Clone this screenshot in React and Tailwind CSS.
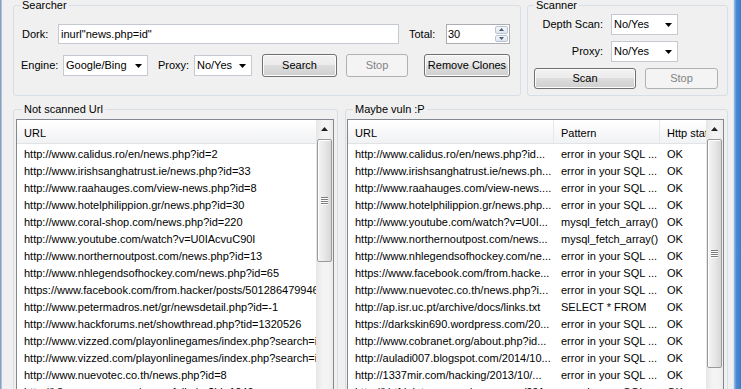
import React from 'react'

const leftRows = [
  'http://www.calidus.ro/en/news.php?id=2',
  'http://www.irishsanghatrust.ie/news.php?id=33',
  'http://www.raahauges.com/view-news.php?id=8',
  'http://www.hotelphilippion.gr/news.php?id=30',
  'http://www.coral-shop.com/news.php?id=220',
  'http://www.youtube.com/watch?v=U0IAcvuC90I',
  'http://www.northernoutpost.com/news.php?id=13',
  'http://www.nhlegendsofhockey.com/news.php?id=65',
  'https://www.facebook.com/from.hacker/posts/501286479946',
  'http://www.petermadros.net/gr/newsdetail.php?id=-1',
  'http://www.hackforums.net/showthread.php?tid=1320526',
  'http://www.vizzed.com/playonlinegames/index.php?search=in',
  'http://www.vizzed.com/playonlinegames/index.php?search=in',
  'http://www.nuevotec.co.th/news.php?id=8',
  'http://k3newsroom.com/news_full.php?id=1240',
]

const sqlErr = 'error in your SQL ...'

const rightRows = [
  ['http://www.calidus.ro/en/news.php?id...', sqlErr],
  ['http://www.irishsanghatrust.ie/news.ph...', sqlErr],
  ['http://www.raahauges.com/view-news....', sqlErr],
  ['http://www.hotelphilippion.gr/news.php...', sqlErr],
  ['http://www.youtube.com/watch?v=U0I...', 'mysql_fetch_array()'],
  ['http://www.northernoutpost.com/news...', 'mysql_fetch_array()'],
  ['http://www.nhlegendsofhockey.com/ne...', sqlErr],
  ['https://www.facebook.com/from.hacke...', sqlErr],
  ['http://www.nuevotec.co.th/news.php?i...', sqlErr],
  ['http://ap.isr.uc.pt/archive/docs/links.txt', 'SELECT * FROM'],
  ['https://darkskin690.wordpress.com/20...', sqlErr],
  ['http://www.cobranet.org/about.php?id...', sqlErr],
  ['http://auladi007.blogspot.com/2014/10...', sqlErr],
  ['http://1337mir.com/hacking/2013/10/...', sqlErr],
  ['http://kbtfdaleteam.wordpress.com/201...', sqlErr],
]

// groupbox (win7 look)
const GroupBox = ({ title, className, children }) => (
  <fieldset className={'min-w-0 shrink-0 rounded-[3px] border border-[#d5dfe5] ' + className}>
    <legend className="ml-[6px] px-[2px] leading-[13px]">{title}</legend>
    {children}
  </fieldset>
)

const Button = ({ label, disabled, className }) =>
  disabled ? (
    <div className={'flex items-center justify-center rounded-[3px] border border-[#adb2b5] bg-[#f4f4f4] text-[#838383] ' + className}>
      {label}
    </div>
  ) : (
    <div
      className={
        'flex items-center justify-center rounded-[3px] border border-[#707070] bg-[linear-gradient(to_bottom,#f2f2f2_0%,#ebebeb_50%,#dddddd_50%,#cfcfcf_100%)] shadow-[inset_0_0_0_1px_#fcfcfc] ' +
        className
      }
    >
      {label}
    </div>
  )

const Combo = ({ value, className }) => (
  <div className={'flex h-[21px] items-center justify-between border border-[#c5c9d0] bg-white pl-[2px] pr-[5px] ' + className}>
    <span>{value}</span>
    <svg width="7" height="4" viewBox="0 0 7 4">
      <polygon points="0,0 7,0 3.5,4" fill="#000" />
    </svg>
  </div>
)

const Numeric = () => (
  <div className="flex h-[20px] w-[64px] items-stretch border border-[#abadb3] bg-white">
    <span className="flex-1 pl-[1px] leading-[18px]">30</span>
    <div className="flex w-[15px] flex-col gap-[1px] p-[1px]">
      <div className="flex flex-1 items-center justify-center rounded-[2px] border border-[#b8c4d2] bg-[linear-gradient(to_bottom,#f6f8fb,#dde4ec)]">
        <svg width="5" height="3" viewBox="0 0 5 3">
          <polygon points="0,3 5,3 2.5,0" fill="#4b5d78" />
        </svg>
      </div>
      <div className="flex flex-1 items-center justify-center rounded-[2px] border border-[#b8c4d2] bg-[linear-gradient(to_bottom,#f6f8fb,#dde4ec)]">
        <svg width="5" height="3" viewBox="0 0 5 3">
          <polygon points="0,0 5,0 2.5,3" fill="#4b5d78" />
        </svg>
      </div>
    </div>
  </div>
)

const Scrollbar = ({ thumbH }) => (
  <div className="flex w-[17px] shrink-0 flex-col bg-[linear-gradient(to_right,#e6e6e6,#f4f4f4_40%,#f4f4f4_70%,#ebebeb)]">
    <div className="flex h-[17px] items-center justify-center">
      <svg width="7" height="4" viewBox="0 0 7 4">
        <polygon points="0,4 7,4 3.5,0" fill="#1f1f1f" />
      </svg>
    </div>
    <div
      className="mx-[1px] mt-[2px] flex flex-col items-center justify-center gap-[1px] rounded-[2px] border border-[#9a9a9a] bg-[linear-gradient(to_right,#f5f5f5,#e8e8e8_50%,#d6d6d6)] shadow-[inset_1px_1px_0_#ffffff]"
      style={{ height: thumbH }}
    >
      {[0, 1, 2, 3].map((i) => (
        <div key={i} className="h-[1px] w-[7px] bg-[#7d7d7d] shadow-[0_1px_0_#ffffff]" />
      ))}
    </div>
  </div>
)

const HeaderCell = ({ label, className }) => (
  <div className={'h-full overflow-hidden whitespace-nowrap border-r border-[#e8e8e8] pl-[7px] pt-[7px] leading-[13px] ' + className}>
    {label}
  </div>
)

export default function App() {
  return (
    <div className="flex h-[389px] w-[741px] overflow-hidden bg-[#f0f0f0] font-['Liberation_Sans',Arial,sans-serif] text-[11px] text-black">
      <div className="h-full w-[2px] shrink-0 bg-[linear-gradient(to_right,#7390b4,#c4d3e4)]" />

      <div className="flex h-full w-[731px] shrink-0 flex-col pl-[11px] pr-[5px]">
        {/* top groups */}
        <div className="-mt-[1px] flex gap-[6px]">
          <GroupBox title="Searcher" className="h-[97px] w-[508px]">
            <div className="mt-[12px] flex h-[20px] items-center pl-[8px]">
              <span className="w-[36px]">Dork:</span>
              <div className="flex h-[20px] w-[341px] items-center border border-[#c5c9d0] bg-white pl-[2px]">
                inurl"news.php=id"
              </div>
              <span className="ml-[10px] w-[37px]">Total:</span>
              <Numeric />
            </div>
            <div className="mt-[10px] flex h-[23px] items-center pl-[7px]">
              <span className="w-[42px]">Engine:</span>
              <Combo value="Google/Bing" className="w-[85px]" />
              <span className="ml-[10px] w-[36px]">Proxy:</span>
              <Combo value="No/Yes" className="w-[58px]" />
              <Button label="Search" className="ml-[10px] h-[23px] w-[75px]" />
              <Button label="Stop" disabled className="ml-[9px] h-[23px] w-[62px]" />
              <Button label="Remove Clones" className="ml-[16px] h-[23px] w-[86px]" />
            </div>
          </GroupBox>

          <GroupBox title="Scanner" className="h-[97px] w-[201px]">
            <div className="mt-[2px] flex h-[21px] items-center">
              <span className="w-[75px] text-right">Depth Scan:</span>
              <Combo value="No/Yes" className="ml-[8px] w-[67px]" />
            </div>
            <div className="mt-[6px] flex h-[21px] items-center">
              <span className="w-[75px] text-right">Proxy:</span>
              <Combo value="No/Yes" className="ml-[8px] w-[67px]" />
            </div>
            <div className="mt-[6px] flex items-center pl-[6px]">
              <Button label="Scan" className="h-[21px] w-[102px]" />
              <Button label="Stop" disabled className="ml-[9px] h-[21px] w-[73px]" />
            </div>
          </GroupBox>
        </div>

        {/* bottom groups */}
        <div className="mt-[7px] flex gap-[7px]">
          <GroupBox title="Not scanned Url" className="h-[300px] w-[325px] pl-[2px] pr-[3px]">
            <div className="mt-[3px] flex h-[290px] w-[318px] border border-[#828790] bg-white">
              <div className="flex min-w-0 flex-1 flex-col overflow-hidden">
                <div className="flex h-[24px] shrink-0 border-b border-[#e2e3e5] bg-[linear-gradient(to_bottom,#ffffff,#f1f2f4)]">
                  <HeaderCell label="URL" className="min-w-0 flex-1 border-r-0" />
                </div>
                <div className="pt-[2px]">
                  {leftRows.map((r, i) => (
                    <div key={i} className="h-[17px] overflow-hidden whitespace-nowrap pl-[7px] leading-[17px]">
                      {r}
                    </div>
                  ))}
                </div>
              </div>
              <Scrollbar thumbH={123} />
            </div>
          </GroupBox>

          <GroupBox title="Maybe vuln :P" className="h-[300px] w-[383px] pl-[1px] pr-[3px]">
            <div className="mt-[3px] flex h-[290px] w-[377px] border border-[#828790] bg-white">
              <div className="flex min-w-0 flex-1 flex-col overflow-hidden">
                <div className="flex h-[24px] shrink-0 border-b border-[#e2e3e5] bg-[linear-gradient(to_bottom,#ffffff,#f1f2f4)]">
                  <HeaderCell label="URL" className="w-[206px] shrink-0" />
                  <HeaderCell label="Pattern" className="w-[106px] shrink-0" />
                  <HeaderCell label="Http status" className="min-w-0 flex-1 border-r-0" />
                </div>
                <div className="pt-[2px]">
                  {rightRows.map(([url, pat], i) => (
                    <div key={i} className="flex h-[17px] whitespace-nowrap leading-[17px]">
                      <div className="w-[206px] shrink-0 overflow-hidden pl-[7px]">{url}</div>
                      <div className="w-[106px] shrink-0 overflow-hidden pl-[7px]">{pat}</div>
                      <div className="min-w-0 flex-1 overflow-hidden pl-[7px]">OK</div>
                    </div>
                  ))}
                </div>
              </div>
              <Scrollbar thumbH={229} />
            </div>
          </GroupBox>
        </div>
      </div>

      <div className="h-full w-[8px] shrink-0 border-l border-[#dfe6ee] bg-[linear-gradient(to_right,#9cbce0,#4a8bd6_35%,#3b7dcb)]" />
    </div>
  )
}
